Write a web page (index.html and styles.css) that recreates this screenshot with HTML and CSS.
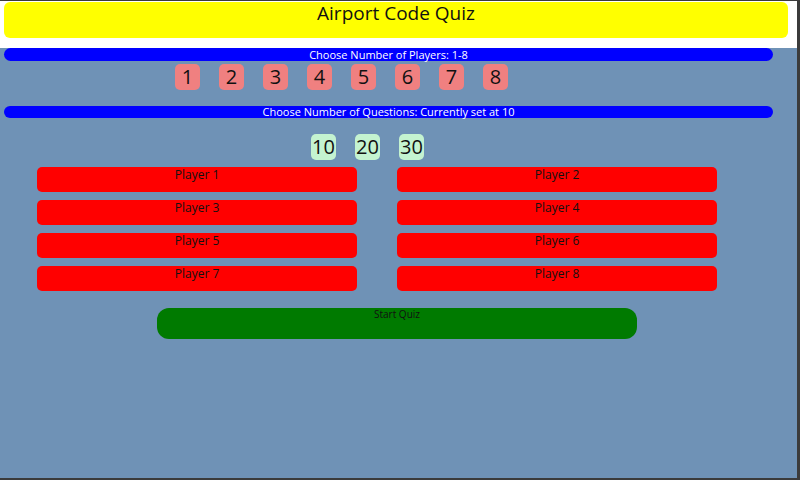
FILE: index.html
```html
<!DOCTYPE html>
<html lang="en">
<head>
    <meta charset="UTF-8">
    <title>Airport Code Quiz</title>
    <meta name="viewport" content="width=device-width, initial-scale=1.0">
    <link rel="stylesheet" href="styles.css">
</head>
<body>
<div class="screen">

    <div class="header">
        <h1 class="title">Airport Code Quiz</h1>
    </div>

    <div class="bar">Choose Number of Players: 1-8</div>
    <div class="choices players-count">
        <button class="pick red">1</button>
        <button class="pick red">2</button>
        <button class="pick red">3</button>
        <button class="pick red">4</button>
        <button class="pick red">5</button>
        <button class="pick red">6</button>
        <button class="pick red">7</button>
        <button class="pick red">8</button>
    </div>

    <div class="bar bar-questions">Choose Number of Questions: Currently set at 10</div>
    <div class="choices questions-count">
        <button class="pick green">10</button>
        <button class="pick green">20</button>
        <button class="pick green">30</button>
    </div>

    <div class="player-grid">
        <button class="player">Player 1</button>
        <button class="player">Player 2</button>
        <button class="player">Player 3</button>
        <button class="player">Player 4</button>
        <button class="player">Player 5</button>
        <button class="player">Player 6</button>
        <button class="player">Player 7</button>
        <button class="player">Player 8</button>
    </div>

    <button class="start">Start Quiz</button>

</div>
</body>
</html>
```

FILE: styles.css
```css
html {
    background-color: #3b3b3b;
}

body {
    margin: 0;
    font-family: "Open Sans", "DejaVu Sans", sans-serif;
}

.screen {
    width: 797px;
    height: 477px;
    margin-top: 1px;
    background-color: #6f92b6;
    overflow: hidden;
}

button {
    font-family: inherit;
    border: none;
    padding: 0;
    color: #111;
    cursor: pointer;
}

.header {
    background-color: white;
    height: 47px;
    padding: 1px 9px 0 4px;
    box-sizing: border-box;
}

.title {
    margin: 0;
    height: 36px;
    background-color: #ffff00;
    border-radius: 6px;
    font-size: 19px;
    font-weight: normal;
    line-height: 23px;
    text-align: center;
    color: #111;
}

.bar {
    margin: 0 24px 0 4px;
    height: 13px;
    border-radius: 7px;
    background-color: #0000ff;
    color: white;
    font-size: 11px;
    line-height: 13px;
    text-align: center;
}

.bar-questions {
    margin-top: 16px;
    height: 12px;
    line-height: 12px;
}

.choices {
    display: flex;
    gap: 19px;
}

.players-count {
    margin-top: 3px;
    padding-left: 175px;
}

.questions-count {
    margin-top: 16px;
    padding-left: 311px;
}

.pick {
    width: 25px;
    height: 26px;
    border-radius: 5px;
    font-size: 20px;
    line-height: 26px;
}

.red {
    background-color: #f08080;
}

.green {
    background-color: #c4f3d0;
}

.player-grid {
    display: grid;
    grid-template-columns: 320px 320px;
    column-gap: 40px;
    row-gap: 8px;
    margin-top: 7px;
    padding-left: 37px;
}

.player {
    height: 25px;
    border-radius: 5px;
    background-color: #ff0000;
    font-size: 12px;
    line-height: 15px;
    display: flex;
    justify-content: center;
    align-items: flex-start;
}

.start {
    display: flex;
    justify-content: center;
    align-items: flex-start;
    width: 480px;
    height: 31px;
    margin: 17px 0 0 157px;
    border-radius: 12px;
    background-color: #007a00;
    font-size: 10px;
    line-height: 12px;
}
```
